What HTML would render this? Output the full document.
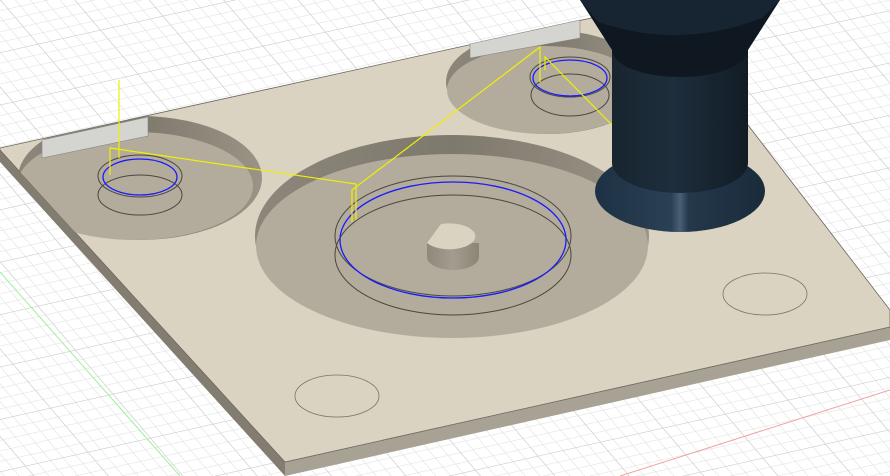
<!DOCTYPE html>
<html><head><meta charset="utf-8"><style>html,body{margin:0;padding:0;background:#fff;overflow:hidden}svg{display:block}</style></head><body>
<svg width="890" height="476" viewBox="0 0 890 476" xmlns="http://www.w3.org/2000/svg">
<defs>
<pattern id="g" width="1" height="1" patternUnits="userSpaceOnUse" patternTransform="matrix(12.5 -2.8 7.5 8.8 0 0)">
<rect width="1" height="1" fill="#fff"/>
<path d="M0 0H1M0 0V1" stroke="#e0e0e0" stroke-width="0.1" fill="none"/>
</pattern>
<pattern id="G" width="5" height="5" patternUnits="userSpaceOnUse" patternTransform="matrix(12.5 -2.8 7.5 8.8 0 0)">
<path d="M0 0H5M0 0V5" stroke="#c8c8c8" stroke-width="0.09" fill="none"/>
</pattern>
<linearGradient id="wall" x1="0" x2="1" y1="0" y2="0">
<stop offset="0" stop-color="#8c877a"/><stop offset="0.5" stop-color="#7e796d"/><stop offset="1" stop-color="#9a9486"/>
</linearGradient>
<linearGradient id="cyl" x1="0" x2="1">
<stop offset="0" stop-color="#18252f"/><stop offset="0.45" stop-color="#1d2e3c"/><stop offset="1" stop-color="#121c25"/>
</linearGradient>
<linearGradient id="flare" x1="0" x2="1">
<stop offset="0" stop-color="#1e3144"/><stop offset="0.45" stop-color="#2a4055"/><stop offset="0.5" stop-color="#4a6075"/><stop offset="0.55" stop-color="#24384b"/><stop offset="1" stop-color="#1a2b3b"/>
</linearGradient>
<linearGradient id="boss" x1="0" x2="1">
<stop offset="0" stop-color="#8e897b"/><stop offset="0.5" stop-color="#a39d8f"/><stop offset="1" stop-color="#8a8577"/>
</linearGradient>
<clipPath id="plate"><polygon points="0,148 655,4 890,310 890,327 285,462 0,150"/></clipPath>
</defs>
<rect width="890" height="476" fill="url(#g)"/>
<rect width="890" height="476" fill="url(#G)"/>
<line x1="0" y1="272" x2="180" y2="476" stroke="#9ef09e" stroke-width="1"/>
<line x1="620" y1="476" x2="890" y2="390" stroke="#f3a0a0" stroke-width="1"/>
<polygon points="0,150 285,462 285,476 0,162" fill="#827d70"/>
<polygon points="285,462 890,327 890,340 285,476" fill="#a7a294"/>
<polygon points="0,148 655,4 890,310 890,327 285,462 0,150" fill="#dbd3c1" stroke="#6b675e" stroke-width="0.8"/>
<g clip-path="url(#plate)">
<ellipse cx="140" cy="178" rx="122" ry="62" fill="url(#wall)"/>
<ellipse cx="135" cy="186" rx="118" ry="54" fill="#b3ac9c"/>
<ellipse cx="548" cy="82" rx="102" ry="52" fill="url(#wall)"/>
<ellipse cx="545" cy="90" rx="98" ry="44" fill="#b3ac9c"/>
<ellipse cx="452" cy="236" rx="197" ry="101" fill="url(#wall)"/>
<ellipse cx="452" cy="246" rx="196" ry="92" fill="#b3ac9c"/>
</g>
<polygon points="42,140 148,117 148,136 42,158" fill="#d4d4d1" stroke="#8a877f" stroke-width="0.6"/>
<polygon points="470,44 580,20 580,38 470,58" fill="#d4d4d1" stroke="#8a877f" stroke-width="0.6"/>
<ellipse cx="765" cy="294" rx="42" ry="21" fill="none" stroke="#7a7468" stroke-width="0.8"/>
<ellipse cx="337" cy="396" rx="42" ry="21" fill="none" stroke="#7a7468" stroke-width="0.8"/>
<g fill="none" stroke-width="1">
<ellipse cx="140" cy="195" rx="42" ry="20" stroke="#4a4740"/>
<ellipse cx="140" cy="176" rx="42" ry="21" stroke="#4a4740"/>
<ellipse cx="140" cy="177" rx="37" ry="18" stroke="#1a1aff" stroke-width="1.3"/>
<ellipse cx="570" cy="95" rx="39" ry="21" stroke="#4a4740"/>
<ellipse cx="570" cy="77" rx="40" ry="20" stroke="#4a4740"/>
<ellipse cx="570" cy="78" rx="37" ry="18" stroke="#1a1aff" stroke-width="1.3"/>
<ellipse cx="453" cy="255" rx="118" ry="60" stroke="#4a4740"/>
<ellipse cx="453" cy="236" rx="118" ry="60" stroke="#4a4740"/>
<ellipse cx="453" cy="240" rx="113" ry="58" stroke="#1a1aff" stroke-width="1.3"/>
</g>
<path d="M427 243 V257 A26 13 0 0 0 479 257 V243 Z" fill="url(#boss)"/>
<path d="M441 224 A26 13 0 1 1 427 243 Z" fill="#dbd3c1"/>
<g fill="none" stroke="#f0f000" stroke-width="1.2">
<polyline points="119,80 119,158"/>
<polyline points="110,175 110,148 356,184 356,220"/>
<polyline points="352,222 352,190 540,47 540,82"/>
<polyline points="545,70 545,57 612,125"/>
</g>
<!-- tool -->
<ellipse cx="680" cy="191" rx="85" ry="41" fill="url(#flare)"/>
<path d="M612 45 H748 V163 A68 30 0 0 1 612 163 Z" fill="url(#cyl)"/>
<path d="M580 0 H780 L748 50 A68 27 0 0 1 612 50 Z" fill="#0f1820"/>
<path d="M580 0 H780 L762 18 Q680 50 598 22 Z" fill="#172532"/>
</svg>
</body></html>
